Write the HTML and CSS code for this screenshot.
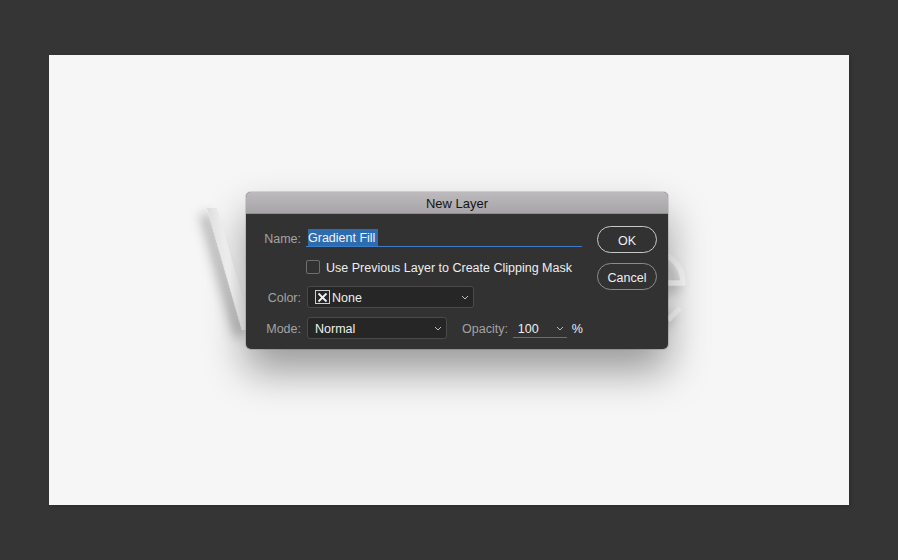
FILE: index.html
```html
<!DOCTYPE html>
<html>
<head>
<meta charset="utf-8">
<link rel="stylesheet" href="styles.css">
</head>
<body>
<div class="canvas">
  <svg class="art" width="800" height="450" viewBox="0 0 800 450">
    <defs>
      <filter id="sh" x="-50%" y="-50%" width="200%" height="200%">
        <feDropShadow dx="-7" dy="6" stdDeviation="6" flood-color="#000" flood-opacity="0.3"/>
      </filter>
      <linearGradient id="g1" x1="0" y1="0" x2="1" y2="0">
        <stop offset="0" stop-color="#dcdcdc"/>
        <stop offset="0.5" stop-color="#ffffff"/>
        <stop offset="1" stop-color="#f2f2f2"/>
      </linearGradient>
    </defs>
    <polygon points="158,153 168,153 203,275 193,275" fill="url(#g1)" filter="url(#sh)"/>
    <g filter="url(#sh)" fill="none" stroke="#fdfdfd" stroke-width="5">
      <path d="M570 228 A32 32 0 0 1 634 228 L575 228"/>
      <path d="M631 253 L619 265"/>
    </g>
  </svg>
  <div class="dialog">
    <div class="titlebar">New Layer</div>
    <div class="body">
      <div class="main">
        <div class="row row-name">
          <span class="label">Name:</span>
          <div class="text-input blue"><span class="sel">Gradient Fill</span></div>
        </div>
        <div class="row row-check">
          <span class="checkbox"></span>
          <span class="value">Use Previous Layer to Create Clipping Mask</span>
        </div>
        <div class="row row-color">
          <span class="label">Color:</span>
          <div class="select select-color">
            <span class="xbox"><svg width="11" height="11" viewBox="0 0 11 11"><path d="M1.5 1.5 L9.5 9.5 M9.5 1.5 L1.5 9.5" stroke="#f2f2f2" stroke-width="1.8"/></svg></span>
            <span class="value">None</span>
            <svg class="chev" width="8" height="5" viewBox="0 0 8 5"><path d="M1 1 L4 4 L7 1" fill="none" stroke="#bdbdbd" stroke-width="1"/></svg>
          </div>
        </div>
        <div class="row row-mode">
          <span class="label">Mode:</span>
          <div class="select select-mode">
            <span class="value">Normal</span>
            <svg class="chev" width="8" height="5" viewBox="0 0 8 5"><path d="M1 1 L4 4 L7 1" fill="none" stroke="#bdbdbd" stroke-width="1"/></svg>
          </div>
          <span class="label opacity-label">Opacity:</span>
          <div class="text-input gray opacity">
            <span class="value">100</span>
            <svg class="chev" width="8" height="5" viewBox="0 0 8 5"><path d="M1 1 L4 4 L7 1" fill="none" stroke="#bdbdbd" stroke-width="1"/></svg>
          </div>
          <span class="value pct">%</span>
        </div>
      </div>
      <div class="buttons">
        <div class="btn btn-ok">OK</div>
        <div class="btn btn-cancel">Cancel</div>
      </div>
    </div>
  </div>
</div>
</body>
</html>
```

FILE: styles.css
```css
html, body {
  margin: 0;
  padding: 0;
  background: #353535;
  width: 898px;
  height: 560px;
  overflow: hidden;
  font-family: "Liberation Sans", Arial, sans-serif;
}

.canvas {
  position: relative;
  margin: 55px 0 0 49px;
  width: 800px;
  height: 450px;
  background: #f6f6f6;
  box-sizing: border-box;
  padding: 137px 0 0 197px;
  box-shadow: 2px 2px 4px rgba(0,0,0,0.15);
}

.art {
  position: absolute;
  left: 0;
  top: 0;
}

.dialog {
  position: relative;
  width: 422px;
  border-radius: 5px;
  overflow: hidden;
  background: #323232;
  box-shadow: 0 22px 40px rgba(0,0,0,0.38), 0 0 0 1px rgba(0,0,0,0.12);
}

.titlebar {
  height: 22px;
  line-height: 24px;
  text-align: center;
  font-size: 13px;
  color: #141414;
  background: linear-gradient(#bcbabc, #a7a5a7);
  border-bottom: 1px solid #8e8c8e;
  box-sizing: border-box;
}

.body {
  display: flex;
  padding: 0 11px 10px 0;
}

.main {
  width: 351px;
  padding-top: 14px;
}

.row {
  display: flex;
  align-items: center;
  font-size: 12.5px;
}

.label {
  color: #a3a3a3;
  width: 55px;
  text-align: right;
  flex: none;
  padding-top: 2px;
}

.value {
  color: #eeeeee;
  padding-top: 2px;
}

.row-name {
  height: 19px;
}

.text-input {
  box-sizing: border-box;
  height: 19px;
  display: flex;
  align-items: center;
}

.text-input.blue {
  margin-left: 5px;
  width: 276px;
  border-bottom: 1px solid #3d7cc9;
  padding-left: 2px;
}

.sel {
  background: #2e6cb0;
  color: #f4f4f4;
  padding: 2px 3px 0 0;
  line-height: 15px;
}

.row-check {
  margin-top: 13px;
  height: 14px;
  padding-left: 60px;
}

.checkbox {
  width: 12px;
  height: 12px;
  border: 1px solid #6e6e6e;
  border-radius: 2px;
  margin-right: 6px;
  flex: none;
}

.row-color {
  margin-top: 12px;
  height: 22px;
}

.select {
  box-sizing: border-box;
  height: 22px;
  margin-left: 6px;
  background: #262626;
  border: 1px solid #4a4a4a;
  border-radius: 3px;
  display: flex;
  align-items: center;
  position: relative;
  padding-left: 7px;
}

.select-color {
  width: 167px;
}

.select-mode {
  width: 140px;
}

.chev {
  position: absolute;
  right: 4px;
  top: 8px;
}

.xbox {
  box-sizing: border-box;
  width: 15px;
  height: 14px;
  border: 1px solid #cfcfcf;
  display: flex;
  align-items: center;
  justify-content: center;
  margin-right: 2px;
}

.row-mode {
  margin-top: 9px;
  height: 22px;
}

.opacity-label {
  width: auto;
  margin-left: 15px;
}

.text-input.gray {
  margin-left: 5px;
  width: 54px;
  border-bottom: 1px solid #6d6d6d;
  padding-left: 5px;
  position: relative;
  margin-top: 1px;
}

.opacity .chev {
  right: 3px;
  top: 7px;
}

.pct {
  margin-left: 5px;
}

.buttons {
  width: 60px;
  margin-left: 0;
  padding-top: 12px;
  display: flex;
  flex-direction: column;
  gap: 10px;
}

.btn {
  box-sizing: border-box;
  height: 27px;
  border-radius: 14px;
  display: flex;
  align-items: center;
  justify-content: center;
  font-size: 12.5px;
  color: #efefef;
  padding-top: 2px;
}

.btn-ok {
  border: 1.5px solid #c9c9c9;
}

.btn-cancel {
  border: 1px solid #8c8c8c;
}
```
